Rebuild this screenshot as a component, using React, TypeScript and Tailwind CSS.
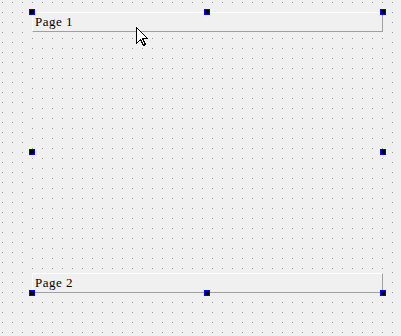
const outerGrid =
  "bg-[#999999] bg-[image:linear-gradient(90deg,#f0f0f0_9px,transparent_9px),linear-gradient(180deg,#f0f0f0_9px,transparent_9px)] bg-[size:10px_10px] bg-[position:3px_3px]";
const innerGrid =
  "bg-[#999999] bg-[image:linear-gradient(90deg,#f0f0f0_9px,transparent_9px),linear-gradient(180deg,#f0f0f0_9px,transparent_9px)] bg-[size:10px_10px] bg-[position:1px_7px]";

const Handle = ({ className }: { className: string }) => (
  <div className={`absolute h-[6px] w-[6px] border border-[#0000ff] bg-black ${className}`} />
);

const PageBar = ({ label }: { label: string }) => (
  <div className="flex h-[20px] items-center border-t border-l border-t-white border-l-white border-b border-r border-b-[#a0a0a0] border-r-[#a0a0a0] bg-[#f0f0f0] pb-[2px] pl-[2px]">
    <span className="font-['Liberation_Serif',serif] text-[13px] leading-none tracking-[0.5px] text-black">
      {label}
    </span>
  </div>
);

export default function App() {
  return (
    <div className={`relative h-[336px] w-[401px] overflow-hidden pl-[32px] pt-[12px] ${outerGrid}`}>
      {/* the form being edited */}
      <div className={`relative flex h-[281px] w-[351px] flex-col ${innerGrid}`}>
        <PageBar label="Page 1" />
        <div className="flex-1" />
        <PageBar label="Page 2" />

        {/* selection handles */}
        <Handle className="-left-[3px] -top-[3px]" />
        <Handle className="left-[172px] -top-[3px]" />
        <Handle className="-right-[3px] -top-[3px]" />
        <Handle className="-left-[3px] top-[137px]" />
        <Handle className="-right-[3px] top-[137px]" />
        <Handle className="-left-[3px] -bottom-[3px]" />
        <Handle className="left-[172px] -bottom-[3px]" />
        <Handle className="-right-[3px] -bottom-[3px]" />
      </div>

      {/* mouse cursor */}
      <svg className="absolute left-[136px] top-[27px]" width="13" height="20" viewBox="0 0 13 20">
        <path
          d="M0.5 0.5 L0.5 16.5 L4.5 12.5 L7.5 18.5 L9.5 17.5 L6.5 11.5 L11.5 11.5 Z"
          fill="white"
          stroke="black"
          strokeWidth="1"
          shapeRendering="crispEdges"
        />
      </svg>
    </div>
  );
}
